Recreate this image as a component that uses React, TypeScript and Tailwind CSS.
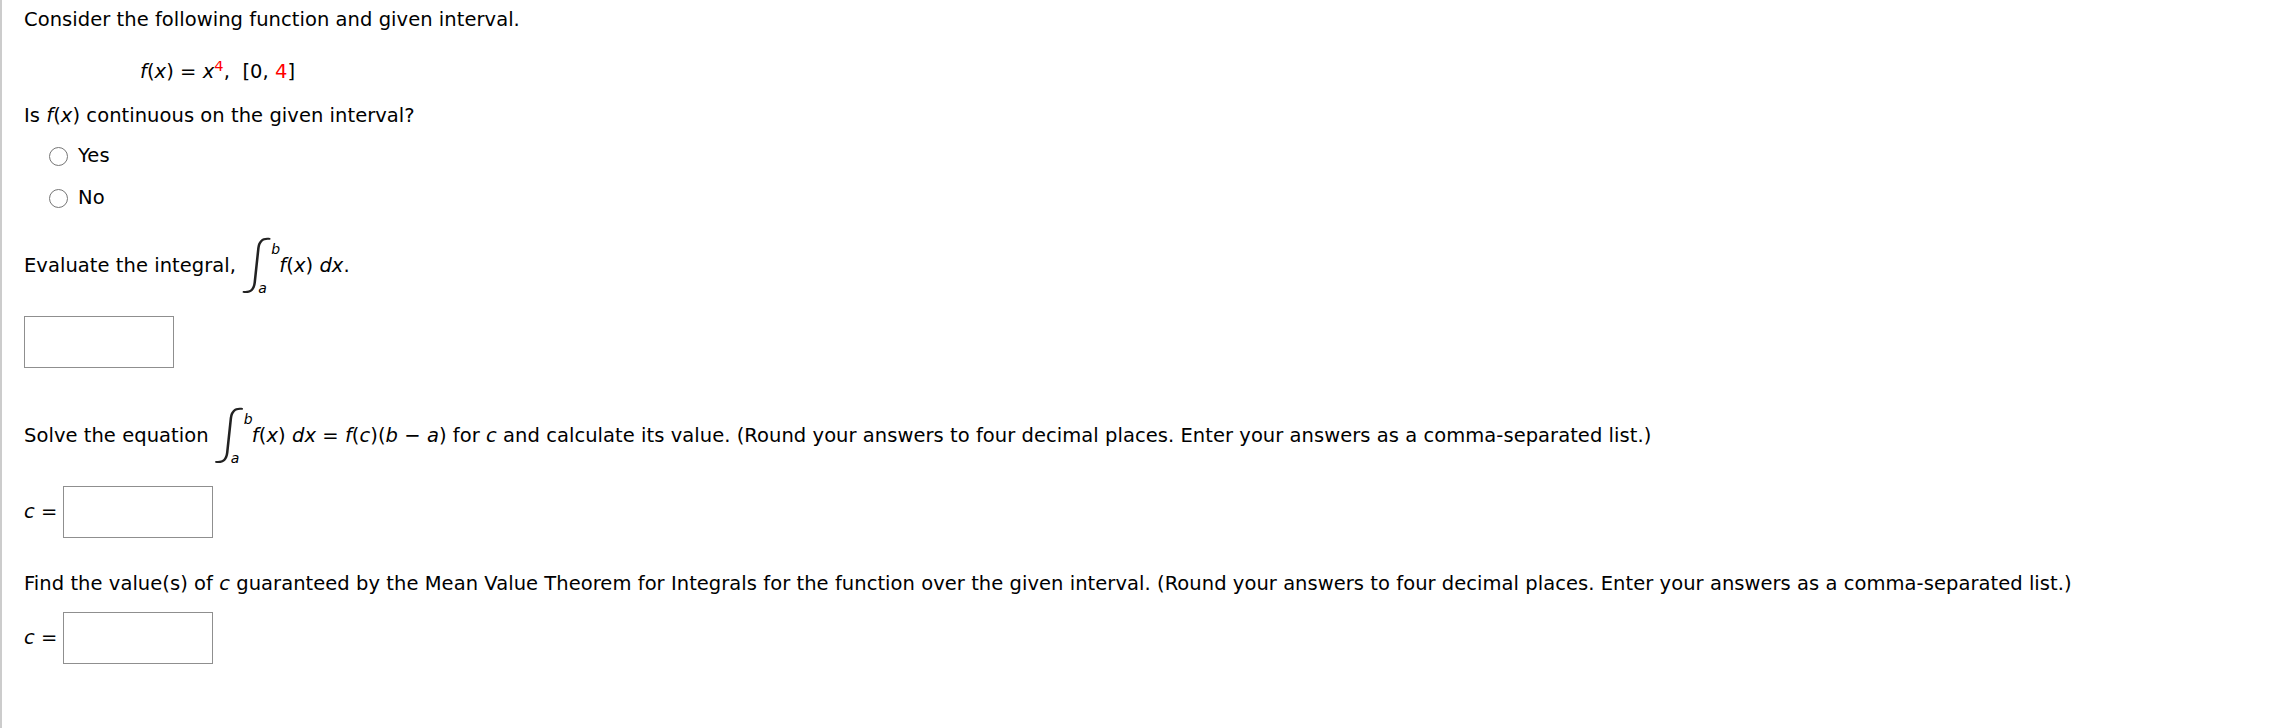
import React from 'react';

const font = { fontFamily: '"DejaVu Sans", Verdana, sans-serif' };

function Integral() {
  return (
    <span className="relative inline-block w-[37px] h-[56px] shrink-0">
      <span
        className="absolute left-0 -top-[6px] text-[56px] leading-none font-light text-[#222]"
        style={{ fontFamily: 'Lato, sans-serif' }}
      >
        ∫
      </span>
      <i className="absolute left-[29px] top-[2px] text-[14px] leading-none">b</i>
      <i className="absolute left-[16px] bottom-[1px] text-[14px] leading-none">a</i>
    </span>
  );
}

function Fx({ v = 'x' }: { v?: string }) {
  return (
    <>
      <i>f</i>(<i>{v}</i>)
    </>
  );
}

function Radio({ label }: { label: string }) {
  return (
    <label className="flex items-center h-[24px] ml-[25px]">
      <span className="w-[19px] h-[19px] rounded-full border border-[#767676] bg-white" />
      <span className="ml-[10px]">{label}</span>
    </label>
  );
}

function AnswerBox() {
  return <div className="w-[150px] h-[52px] border border-[#8f8f8f] bg-white" />;
}

export default function App() {
  return (
    <div
      className="min-h-[728px] bg-white border-l-2 border-[#cccccc] pl-[22px] pt-2 text-[19.5px] leading-[24px] tracking-[0.05px] text-black"
      style={font}
    >
      <p>Consider the following function and given interval.</p>

      <p className="mt-[28px] ml-[116px]">
        <Fx /> = <i>x</i>
        <sup className="text-[#ff0000] not-italic">4</sup>,&nbsp;&nbsp;[0, <span className="text-[#ff0000]">4</span>]
      </p>

      <p className="mt-[20px]">
        Is <Fx /> continuous on the given interval?
      </p>

      <div className="mt-4">
        <Radio label="Yes" />
      </div>
      <div className="mt-[18px]">
        <Radio label="No" />
      </div>

      <div className="mt-[30px] flex items-center h-[56px]">
        <span className="mb-[5px] whitespace-pre">Evaluate the integral, </span>
        <Integral />
        <span className="mb-[5px]">
          <Fx /> <i>dx</i>.
        </span>
      </div>

      <div className="mt-[20px]">
        <AnswerBox />
      </div>

      <div className="mt-[42px] flex items-center h-[56px]">
        <span className="mb-[5px] whitespace-pre">Solve the equation </span>
        <Integral />
        <span className="mb-[5px] whitespace-nowrap">
          <Fx /> <i>dx</i> = <Fx v="c" />(<i>b</i> − <i>a</i>) for <i>c</i> and calculate its value. (Round your
          answers to four decimal places. Enter your answers as a comma-separated list.)
        </span>
      </div>

      <div className="mt-[20px] flex items-center gap-[8px]">
        <span className="whitespace-nowrap w-[31px]">
          <i>c</i> =
        </span>
        <AnswerBox />
      </div>

      <p className="mt-[34px] whitespace-nowrap">
        Find the value(s) of <i>c</i> guaranteed by the Mean Value Theorem for Integrals for the function over the
        given interval. (Round your answers to four decimal places. Enter your answers as a comma-separated list.)
      </p>

      <div className="mt-[16px] flex items-center gap-[8px]">
        <span className="whitespace-nowrap w-[31px]">
          <i>c</i> =
        </span>
        <AnswerBox />
      </div>
    </div>
  );
}
